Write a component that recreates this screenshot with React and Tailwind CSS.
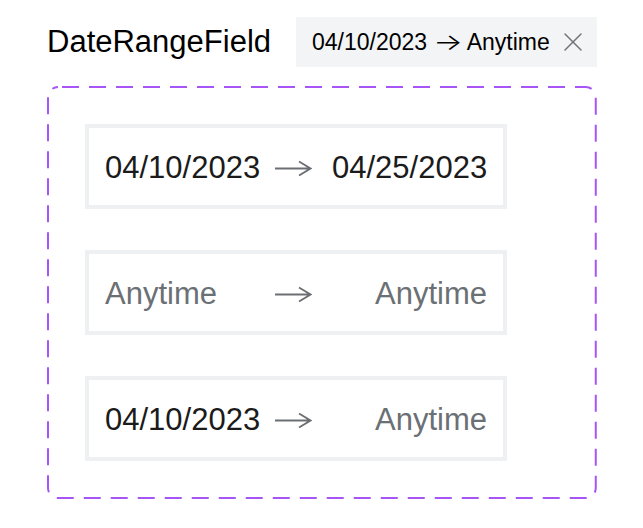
import { X } from "lucide-react";

const FONT = { fontFamily: '"Liberation Sans", Arial, sans-serif' };

const rows = [
  { start: "04/10/2023", end: "04/25/2023" },
  { start: null, end: null },
  { start: "04/10/2023", end: null },
];

function Arrow() {
  return (
    <svg width="37" height="16" viewBox="0 0 37 16" className="ml-[15px] mr-[20px] shrink-0 text-[#6b6f73]">
      <path d="M0 8.5 H35.5 M24 1.5 L35.5 8.5 L24 15.5" fill="none" stroke="currentColor" strokeWidth="1.8" />
    </svg>
  );
}

function DateInput({ value, align }) {
  return (
    <div className={`w-[155px] text-[31px] leading-none whitespace-nowrap ${align === "right" ? "text-right" : "text-left"} ${value ? "text-[#1b1b1b]" : "text-[#6b7075]"}`}>
      {value || "Anytime"}
    </div>
  );
}

function RangeField({ start, end }) {
  return (
    <div className="inline-flex h-[85px] items-center self-start border-4 border-[#eff0f1] bg-white px-4 pt-[2px]">
      <DateInput value={start} />
      <Arrow />
      <DateInput value={end} align="right" />
    </div>
  );
}

export default function App() {
  return (
    <div className="min-h-screen bg-white pl-[47px] pt-[17px]" style={FONT}>
      <div className="inline-flex flex-col gap-[19px]">
        <div className="flex items-center gap-[25px]">
          <h1 className="text-[31px] font-normal leading-9 text-black">DateRangeField</h1>
          <div className="flex h-[50px] items-center gap-[7px] bg-[#f3f4f6] pl-4 pr-2">
            <span className="text-[23px] leading-none text-black">
              04/10/2023{" "}
              <span
                className="inline-block w-[28px] scale-x-[1.35] text-center text-[23px] font-light"
                style={{ fontFamily: "Inter, sans-serif" }}
              >
                →
              </span>
              {" "}Anytime
            </span>
            <X size={32} strokeWidth={1.1} className="text-[#707478]" />
          </div>
        </div>

        {/* dashed outline drawn as svg so the dash length matches */}
        <div className="relative flex flex-col gap-[41px] rounded-[11px] border-2 border-transparent p-9">
          <svg className="pointer-events-none absolute -inset-[2px] h-[calc(100%+4px)] w-[calc(100%+4px)]">
            <rect
              x="1"
              y="1"
              rx="10"
              style={{ width: "calc(100% - 2px)", height: "calc(100% - 2px)" }}
              fill="none"
              stroke="#a855f7"
              strokeWidth="2"
              strokeDasharray="17 10"
              strokeDashoffset="-4"
            />
          </svg>
          {rows.map((r, i) => (
            <RangeField key={i} start={r.start} end={r.end} />
          ))}
        </div>
      </div>
    </div>
  );
}
